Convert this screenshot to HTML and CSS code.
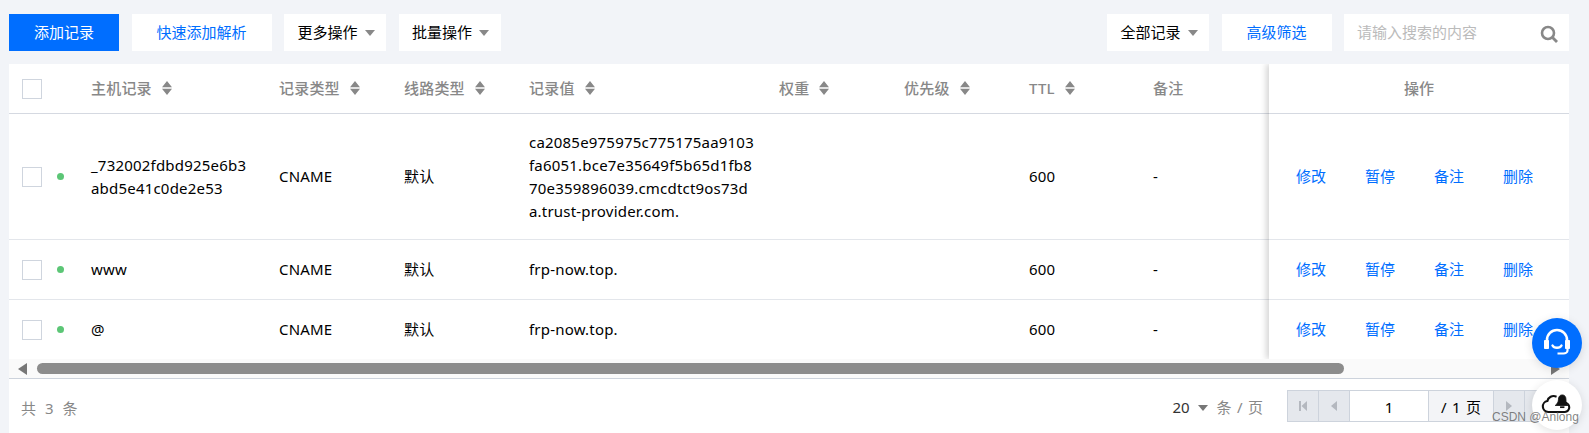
FILE: index.html
```html
<!DOCTYPE html>
<html lang="zh-CN">
<head>
<meta charset="utf-8">
<title>记录管理</title>
<link rel="stylesheet" href="styles.css">
</head>
<body>
<svg class="defs" width="0" height="0">
  <symbol id="sort" viewBox="0 0 10 14"><path d="M5 0l5 6.200H0zM5 14l5-6.200H0z"/></symbol>
  <symbol id="caret" viewBox="0 0 10 6"><path d="M0 0h10L5 6z"/></symbol>
</svg>
<main class="page">
  <div class="toolbar">
    <div class="group">
      <button class="btn primary w110">添加记录</button>
      <button class="btn link w140">快速添加解析</button>
      <button class="btn menu">更多操作<svg class="caret"><use href="#caret"/></svg></button>
      <button class="btn menu">批量操作<svg class="caret"><use href="#caret"/></svg></button>
    </div>
    <div class="group">
      <button class="btn menu">全部记录<svg class="caret"><use href="#caret"/></svg></button>
      <button class="btn link w110">高级筛选</button>
      <div class="search">
        <span class="placeholder">请输入搜索的内容</span>
        <svg class="search-icon" viewBox="0 0 18 18"><circle cx="8" cy="8" r="6" fill="none" stroke="#888" stroke-width="2.6"/><path d="M12.5 12.5L17 17" stroke="#888" stroke-width="2.8"/></svg>
      </div>
    </div>
  </div>

  <section class="table">
    <div class="body">
      <div class="main">
        <div class="row head">
          <div class="cell lead"><span class="check"></span></div>
          <div class="cell">主机记录<svg class="sort"><use href="#sort"/></svg></div>
          <div class="cell">记录类型<svg class="sort"><use href="#sort"/></svg></div>
          <div class="cell">线路类型<svg class="sort"><use href="#sort"/></svg></div>
          <div class="cell">记录值<svg class="sort"><use href="#sort"/></svg></div>
          <div class="cell">权重<svg class="sort"><use href="#sort"/></svg></div>
          <div class="cell">优先级<svg class="sort"><use href="#sort"/></svg></div>
          <div class="cell">TTL<svg class="sort"><use href="#sort"/></svg></div>
          <div class="cell">备注</div>
        </div>
        <div class="row tall">
          <div class="cell lead"><span class="check"></span><span class="dot"></span></div>
          <div class="cell">_732002fdbd925e6b3<br>abd5e41c0de2e53</div>
          <div class="cell">CNAME</div>
          <div class="cell">默认</div>
          <div class="cell">ca2085e975975c775175aa9103<br>fa6051.bce7e35649f5b65d1fb8<br>70e359896039.cmcdtct9os73d<br>a.trust-provider.com.</div>
          <div class="cell"></div>
          <div class="cell"></div>
          <div class="cell">600</div>
          <div class="cell">-</div>
        </div>
        <div class="row">
          <div class="cell lead"><span class="check"></span><span class="dot"></span></div>
          <div class="cell">www</div>
          <div class="cell">CNAME</div>
          <div class="cell">默认</div>
          <div class="cell">frp-now.top.</div>
          <div class="cell"></div>
          <div class="cell"></div>
          <div class="cell">600</div>
          <div class="cell">-</div>
        </div>
        <div class="row last">
          <div class="cell lead"><span class="check"></span><span class="dot"></span></div>
          <div class="cell">@</div>
          <div class="cell">CNAME</div>
          <div class="cell">默认</div>
          <div class="cell">frp-now.top.</div>
          <div class="cell"></div>
          <div class="cell"></div>
          <div class="cell">600</div>
          <div class="cell">-</div>
        </div>
      </div>
      <div class="fixed">
        <div class="frow head center">操作</div>
        <div class="frow tall"><a>修改</a><a>暂停</a><a>备注</a><a>删除</a></div>
        <div class="frow"><a>修改</a><a>暂停</a><a>备注</a><a>删除</a></div>
        <div class="frow last"><a>修改</a><a>暂停</a><a>备注</a><a>删除</a></div>
      </div>
    </div>
    <div class="scrollbar">
      <span class="arrow-left"></span>
      <span class="track"><span class="thumb"></span></span>
      <span class="arrow-right"></span>
    </div>
    <footer class="footer">
      <span class="total">共 3 条</span>
      <div class="pager-wrap">
        <span class="size">20<svg class="caret small"><use href="#caret"/></svg></span>
        <span class="unit">条 / 页</span>
        <div class="pager">
          <span class="pg"><svg width="10" height="10" viewBox="0 0 10 10"><path d="M1 0h2v10H1zM9 0v10L3.5 5z"/></svg></span>
          <span class="pg"><svg width="8" height="10" viewBox="0 0 8 10"><path d="M7 0v10L1 5z"/></svg></span>
          <span class="pg-input">1</span>
          <span class="pg-total">/ 1 页</span>
          <span class="pg"><svg width="8" height="10" viewBox="0 0 8 10"><path d="M1 0v10l6-5z"/></svg></span>
          <span class="pg"></span>
        </div>
      </div>
    </footer>
  </section>
</main>

<div class="float blue">
  <svg width="34" height="34" viewBox="0 0 34 34" fill="none" stroke="#fff">
    <path d="M7 17v-3a10 10 0 0 1 20 0v3" stroke-width="2.6"/>
    <path d="M4.500 14.500h4v8h-4z" fill="#fff" stroke-width="1"/>
    <path d="M25.500 14.500h4v8h-4z" fill="#fff" stroke-width="1"/>
    <path d="M12.500 19.500c1.500 3 7.500 3 9 0" stroke-width="2.400" stroke-linecap="round"/>
    <path d="M27.500 22v2.500c0 1.800-2 3-4 3h-6" stroke-width="2.200"/>
  </svg>
</div>
<div class="float white">
  <svg width="32" height="28" viewBox="0 0 36 32" fill="none" stroke="#111">
    <path d="M22 13.500h4.500a5.200 5.200 0 0 1 .5 10.500H8a6.300 6.300 0 0 1-1-12.500C8 7 12.500 4.500 17.500 6.500" stroke-width="2.400"/>
    <path d="M16 16.500h14.500c-2-1.500-2.300-4-2.300-7 0-3-1.500-5-4.200-5s-4.300 2-4.300 5c0 3-1.500 5.500-3.700 7z" fill="#111" stroke-width="1"/>
    <path d="M21.500 18.500h5" stroke-width="2"/>
  </svg>
</div>
<span class="watermark">CSDN @Anlong</span>
</body>
</html>
```
FILE: styles.css
```css
* { box-sizing: border-box; }
html, body { margin: 0; height: 100%; }
body {
  background: #f2f4f8;
  font-family: "Noto Sans", "Noto Sans CJK SC", sans-serif;
  font-size: 15px;
  line-height: 23px;
  color: #000;
  overflow: hidden;
}
.defs { position: absolute; }
.page { padding: 14px 20px 0 9px; }

.toolbar { display: flex; justify-content: space-between; height: 37px; margin-bottom: 13px; }
.group { display: flex; gap: 12.500px; }
.btn {
  height: 37px;
  border: 0;
  background: #fff;
  font: inherit;
  color: #000;
  padding: 0;
  display: flex;
  align-items: center;
  justify-content: center;
}
.primary { background: #006eff; color: #fff; }
.link { color: #006eff; }
.w110 { width: 110px; }
.w140 { width: 140px; }
.menu { width: 102px; gap: 7px; padding-left: 2px; }
.caret { width: 10px; height: 6px; fill: #888; }
.caret.small { margin: 0 0 2px 8px; fill: #777; }
.search {
  width: 225px;
  background: #fff;
  display: flex;
  align-items: center;
  justify-content: space-between;
  padding: 0 11px 0 13px;
}
.placeholder { color: #bbb; }
.search-icon { width: 18px; height: 18px; margin-top: 2px; }

.table { background: #fff; }
.body { display: flex; height: 295px; }
.main { flex: 1; min-width: 0; }
.fixed {
  width: 300px;
  background: #fff;
  box-shadow: -3px 0 6px rgba(0, 0, 0, .16);
  clip-path: inset(0 0 0 -12px);
}
.row, .frow { height: 60px; border-bottom: 1px solid #e3e6eb; }
.row {
  display: grid;
  grid-template-columns: 82px 188px 125px 125px 250px 125px 125px 124px 1fr;
  align-items: center;
}
.row.head, .frow.head { height: 50px; border-bottom: 1px solid #d5d9e1; color: #888; font-weight: 500; }
.row.tall, .frow.tall { height: 126px; }
.row.last, .frow.last { height: 59px; border-bottom: 0; }
.cell { min-width: 0; white-space: nowrap; letter-spacing: .2px; }
.lead { display: flex; align-items: center; padding-left: 13px; }
.check { width: 20px; height: 20px; border: 1px solid #cfd5de; background: #fff; flex: none; }
.dot { width: 7px; height: 7px; border-radius: 50%; background: #5cc676; margin-left: 15px; flex: none; }
.sort { width: 10px; height: 14px; fill: #888; margin-left: 10px; vertical-align: -1px; }
.frow {
  display: flex;
  align-items: center;
  justify-content: space-between;
  padding: 0 36px 0 27px;
  color: #006eff;
}
.frow.center { justify-content: center; padding: 0; }

.scrollbar {
  display: flex;
  align-items: center;
  height: 20px;
  padding: 0 9px 0 9px;
  background: #fafafa;
  border-bottom: 1px solid #cdd3dc;
}
.arrow-left { border: 6px solid transparent; border-left: 0; border-right: 9px solid #777; }
.arrow-right { border: 6px solid transparent; border-right: 0; border-left: 9px solid #777; }
.track { flex: 1; padding: 0 207px 0 10px; }
.thumb { display: block; height: 11px; border-radius: 6px; background: #8c8c8c; }

.footer {
  display: flex;
  justify-content: space-between;
  align-items: center;
  height: 60px;
  padding: 0 12px 6px 12px;
  color: #888;
}
.total { word-spacing: 5px; padding-top: 4px; }
.pager-wrap { display: flex; align-items: center; }
.size { color: #333; margin-right: 9px; padding-top: 2px; }
.unit { margin-right: 24px; word-spacing: 1.500px; padding-top: 2px; }
.pager { display: flex; height: 32px; border: 1px solid #cdd3dc; background: #e5e8ed; }
.pg {
  width: 31px;
  display: flex;
  align-items: center;
  justify-content: center;
  border-right: 1px solid #cdd3dc;
  fill: #b4b8bf;
}
.pg:last-child { border-right: 0; }
.pg-input, .pg-total {
  color: #000;
  text-align: center;
  line-height: 30px;
  padding-top: 1px;
  border-right: 1px solid #cdd3dc;
}
.pg-input { width: 79px; background: #fff; }
.pg-total { width: 65px; background: #f3f4f7; word-spacing: 1.500px; }

.float {
  position: absolute;
  left: 1532px;
  width: 50px;
  height: 50px;
  border-radius: 50%;
  display: flex;
  align-items: center;
  justify-content: center;
  box-shadow: 0 2px 10px rgba(0, 0, 0, .12);
}
.blue { top: 318px; background: #006eff; }
.white { top: 380px; background: #fff; }
.watermark {
  position: absolute;
  left: 1492px;
  top: 407px;
  font: 12px/20px "Liberation Sans", sans-serif;
  color: rgba(90, 90, 90, .75);
  white-space: nowrap;
}
```
